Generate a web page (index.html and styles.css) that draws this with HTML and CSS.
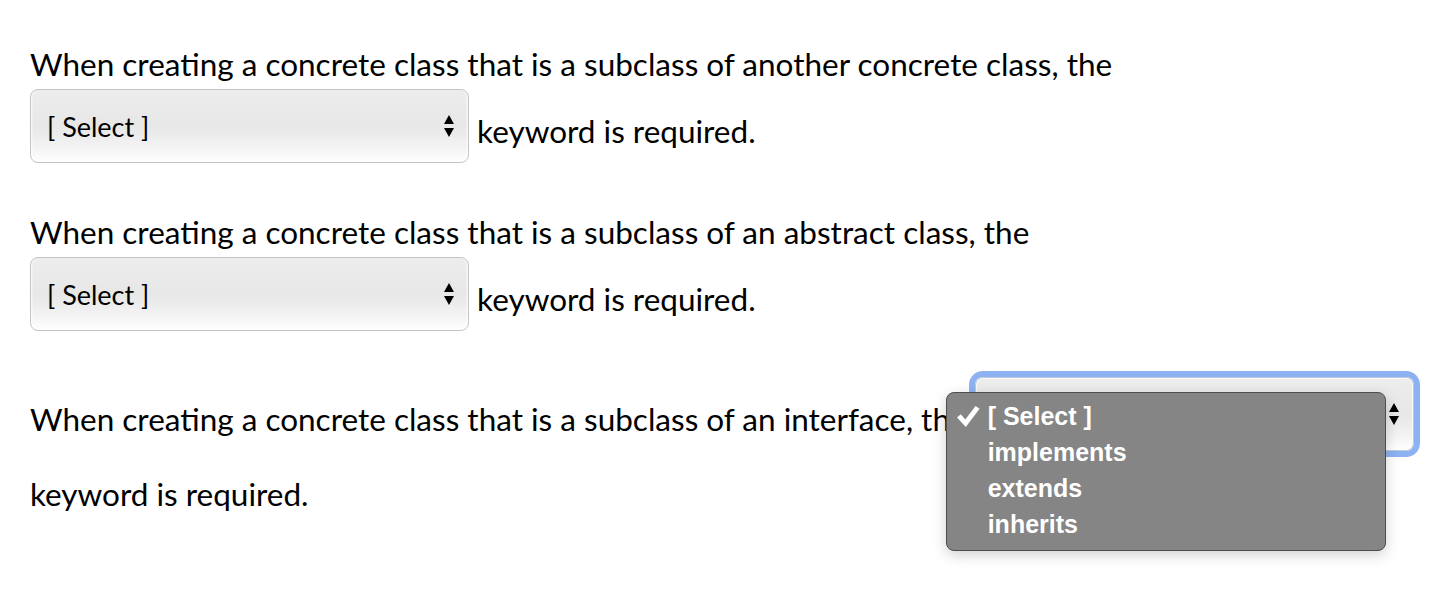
FILE: index.html
```html
<!DOCTYPE html>
<html>
<head>
<meta charset="utf-8">
<link rel="stylesheet" href="styles.css">
</head>
<body>
<div class="quiz">
  <p class="q">When creating a concrete class that is a subclass of another concrete class, the <span class="sel"><span class="sel-text">[ Select ]</span><svg class="arrows" width="12" height="24" viewBox="0 0 12 24"><path d="M6 1 L11 10 L1 10 Z M1 14 L11 14 L6 23 Z" fill="#000"/></svg></span> keyword is required.</p>
  <p class="q">When creating a concrete class that is a subclass of an abstract class, the <span class="sel"><span class="sel-text">[ Select ]</span><svg class="arrows" width="12" height="24" viewBox="0 0 12 24"><path d="M6 1 L11 10 L1 10 Z M1 14 L11 14 L6 23 Z" fill="#000"/></svg></span> keyword is required.</p>
  <p class="q">When creating a concrete class that is a subclass of an interface, the <span class="sel sel-open"><span class="sel-text"></span><svg class="arrows" width="12" height="24" viewBox="0 0 12 24"><path d="M6 1 L11 10 L1 10 Z M1 14 L11 14 L6 23 Z" fill="#000"/></svg><span class="menu"><span class="opt"><svg class="check" width="23" height="21" viewBox="0 0 23 21"><path d="M0 11.5 L3.8 8.2 L8.3 13.6 L18.6 0 L22.6 2.8 L8.8 21 Z" fill="#fff"/></svg>[ Select ]</span><span class="opt">implements</span><span class="opt">extends</span><span class="opt">inherits</span></span></span> keyword is required.</p>
</div>
</body>
</html>
```
FILE: styles.css
```css
html, body { margin: 0; padding: 0; background: #fff; }
body { min-height: 598px; }
.quiz {
  padding: 40px 30px 0 30px;
  font-family: Lato, "Liberation Sans", sans-serif;
  font-size: 31.5px;
  color: #000;
}
.q { margin: 0 0 26px 0; line-height: 48px; }
.sel {
  position: relative;
  display: inline-flex;
  align-items: center;
  justify-content: space-between;
  box-sizing: border-box;
  width: 439px;
  height: 74px;
  vertical-align: middle;
  margin: 1px 0 19px 0;
  border: 1px solid #c4c4c4;
  border-radius: 8px;
  background: linear-gradient(#ededed 0%, #e7e7e7 50%, #f3f3f3 80%, #ffffff 100%);
  box-shadow: inset 2px 0 2px -1px rgba(255,255,255,0.9), inset -2px 0 2px -1px rgba(255,255,255,0.9);
  padding: 0 13px 0 16px;
  font-size: 27px;
  line-height: 1;
}
.sel-text { position: relative; top: 0; }
.arrows { position: relative; top: 0; }
.sel-open {
  border-color: #bcc8dc;
  box-shadow: 0 0 0 6px #8db2f1, inset 0 0 0 1px rgba(255,255,255,0.8);
}
.menu {
  position: absolute;
  left: -30px;
  top: 14px;
  width: 440px;
  height: 159px;
  box-sizing: border-box;
  background: #858585;
  border: 1px solid #4e4e4e;
  border-radius: 8px;
  box-shadow: 0 4px 14px rgba(0,0,0,0.18);
  display: flex;
  flex-direction: column;
  padding: 5px 0 0 41px;
  font-family: "Liberation Sans", Arial, sans-serif;
  font-weight: bold;
  font-size: 25px;
  color: #fff;
  z-index: 2;
}
.opt { position: relative; height: 36px; line-height: 36px; }
.check { position: absolute; left: -31px; top: 8px; }
```
